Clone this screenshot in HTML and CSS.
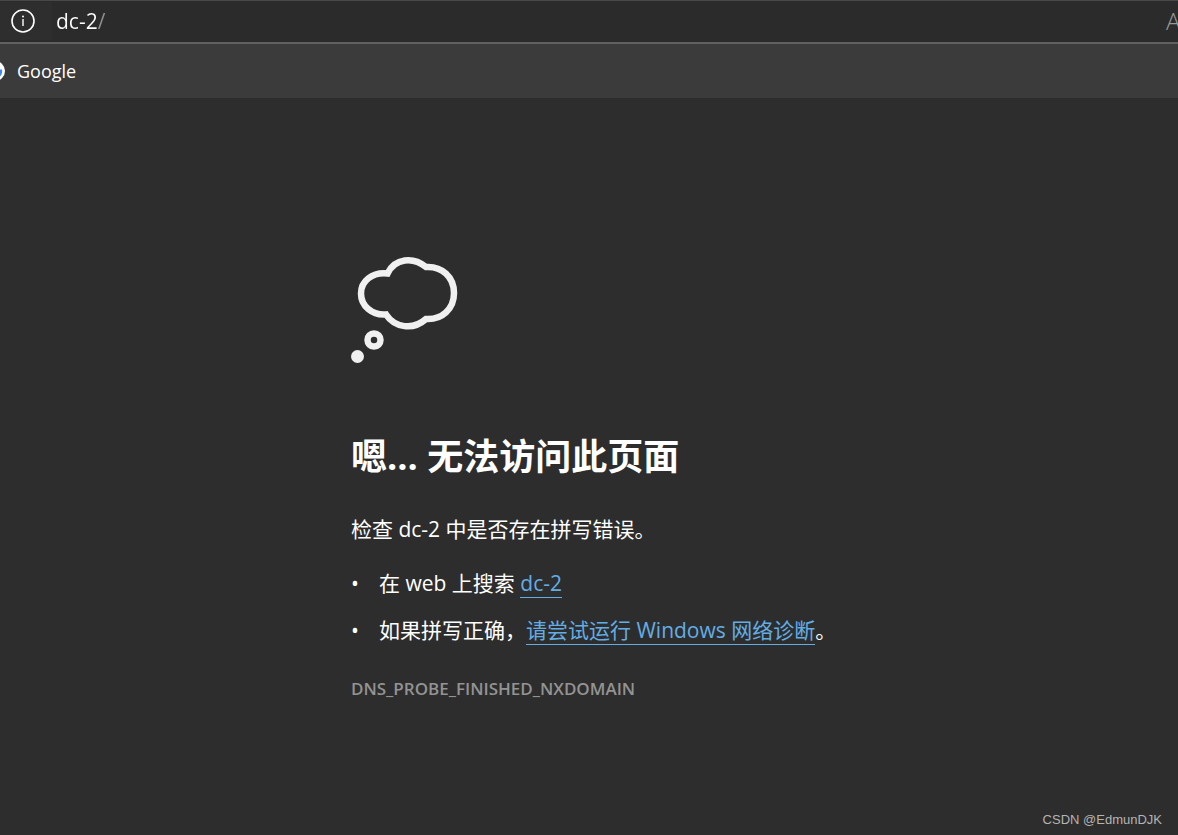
FILE: index.html
```html
<!DOCTYPE html>
<html lang="zh-CN">
<head>
    <meta charset="UTF-8">
    <meta name="viewport" content="width=device-width, initial-scale=1.0">
    <title>dc-2</title>
    <link rel="stylesheet" href="styles.css">
</head>
<body>
    <header>
        <div class="address-bar">
            <button class="info-button" type="button" aria-label="Info">
                <svg width="24" height="24" viewBox="0 0 24 24" fill="none">
                    <circle cx="12" cy="12" r="11" stroke="#fff" stroke-width="1.6"/>
                    <path d="M12 10v7" stroke="#fff" stroke-width="1.4"/>
                    <circle cx="12" cy="7.4" r="1" fill="#fff"/>
                </svg>
            </button>
            <input class="url" type="text" value="dc-2/" aria-label="URL">
            <button class="read-button" type="button">A</button>
        </div>
        <nav class="bookmarks">
            <a class="bookmark" href="#">
                <svg class="bookmark-icon" width="20" height="20" viewBox="0 0 20 20">
                    <circle cx="10" cy="10" r="10" fill="#fff"/>
                    <path d="M10 8.5h7c.6 4-.8 6-2.600 7.500l-2.400-2c1-.6 1.600-1.400 1.800-2.500H10z" fill="#4285f4"/>
                </svg>
                <span>Google</span>
            </a>
        </nav>
    </header>

    <main class="error-page">
        <svg class="thought-icon" width="108" height="108" viewBox="0 0 108 108" fill="none">
            <path d="M36.500 17.500C44 2 62 .5 75 11C91 10 103 21 103 37C103 53 91 64 75 63C62 74.500 44 72 35 58.500C21 59.500 10 50 10 37.500C10 25 21 16 36.500 17.500Z" stroke="#f0f0f0" stroke-width="6.5"/>
            <circle cx="23" cy="84" r="6.5" stroke="#f0f0f0" stroke-width="6.5"/>
            <circle cx="6.5" cy="100.5" r="6.5" fill="#f0f0f0"/>
        </svg>
        <h1>嗯… 无法访问此页面</h1>
        <p class="summary">检查 dc-2 中是否存在拼写错误。</p>
        <ul class="suggestions">
            <li>在 web 上搜索 <a href="#">dc-2</a></li>
            <li>如果拼写正确，<a href="#">请尝试运行 Windows 网络诊断</a>。</li>
        </ul>
        <p class="error-code">DNS_PROBE_FINISHED_NXDOMAIN</p>
    </main>

    <footer>CSDN @EdmunDJK</footer>
</body>
</html>
```
FILE: styles.css
```css
* {
    box-sizing: border-box;
}

body {
    margin: 0;
    min-height: 100vh;
    display: flex;
    flex-direction: column;
    overflow-x: hidden;
    background-color: #2d2d2d;
    color: #fff;
    font-family: "Open Sans", "Noto Sans CJK SC", sans-serif;
    font-size: 21px;
}

button {
    padding: 0;
    border: none;
    background: none;
    cursor: pointer;
}

/* Address bar */
.address-bar {
    display: flex;
    align-items: center;
    height: 44px;
    padding-bottom: 2px;
    overflow: hidden;
    background-color: #2b2b2b;
    border-top: 1px solid #484848;
    border-bottom: 2px solid #606060;
}

.info-button {
    display: flex;
    align-items: center;
    width: 52px;
    height: 38px;
    padding-left: 11px;
    background-color: #2e2e2e;
}

.url {
    flex: 1;
    min-width: 0;
    margin-left: 4px;
    padding: 0;
    border: none;
    outline: none;
    /* host is white, the rest of the address is dimmed */
    background: linear-gradient(to right, #fff 42px, #8f8f8f 42px);
    -webkit-background-clip: text;
    background-clip: text;
    -webkit-text-fill-color: transparent;
    font-family: inherit;
    font-size: 21px;
}

.read-button {
    flex: none;
    width: 12px;
    color: #999;
    font-family: "Open Sans", sans-serif;
    font-size: 24px;
    font-weight: 300;
    text-align: left;
}

/* Bookmarks */
.bookmarks {
    display: flex;
    height: 54px;
    overflow: hidden;
    background-color: #3b3b3b;
}

.bookmark {
    display: flex;
    align-items: center;
    gap: 12px;
    height: 54px;
    margin-left: -15px;
    color: #fff;
    font-size: 18px;
    text-decoration: none;
}

/* Error page */
.error-page {
    flex: 1;
    width: 100%;
    max-width: 476px;
    margin: 0 auto;
    padding-top: 158px;
}

.thought-icon {
    display: block;
}

h1 {
    margin: 69px 0 0;
    font-size: 36px;
    line-height: 48px;
}

.summary {
    margin: 32px 0 0;
    line-height: 32px;
}

.suggestions {
    margin: 22px 0 0;
    padding: 0;
    list-style: none;
}

.suggestions li {
    display: flex;
    margin-bottom: 15px;
    line-height: 32px;
    white-space: pre;
}

.suggestions li::before {
    content: "•";
    flex: none;
    width: 28px;
}

.suggestions a {
    height: 31px;
    color: #63ade5;
    border-bottom: 1px solid #63ade5;
    text-decoration: none;
}

.error-code {
    margin: 31px 0 0;
    color: #939393;
    font-size: 17px;
    font-weight: 600;
    line-height: 24px;
}

footer {
    padding: 0 16px 5px;
    color: #b4b4b4;
    font-family: "Liberation Sans", Arial, sans-serif;
    font-size: 13px;
    line-height: 20px;
    text-align: right;
}
```
